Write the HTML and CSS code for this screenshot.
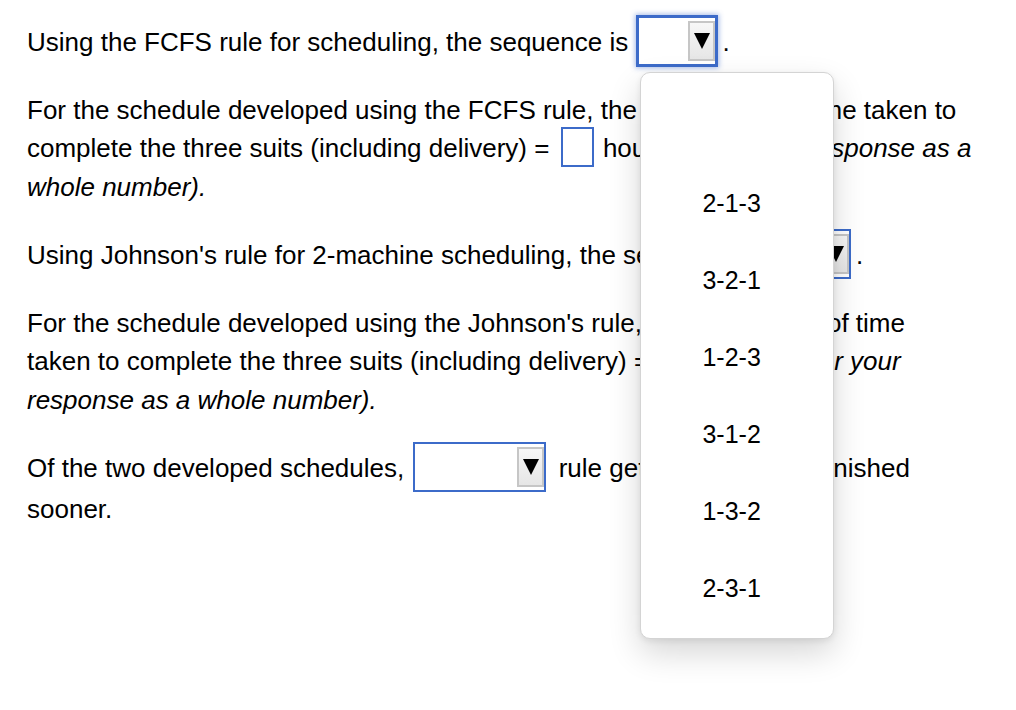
FILE: index.html
```html
<!DOCTYPE html>
<html lang="en">
<head>
  <meta charset="UTF-8" />
  <meta name="viewport" content="width=device-width, initial-scale=1.0"/>
  <title>Scheduling question</title>
  <link rel="stylesheet" href="styles.css">
</head>
<body>
  <div class="question">
    <div class="para">
      Using the FCFS rule for scheduling, the sequence is
      <span class="pick pick-open" style="width: 80px;">
        <span class="pick-btn"><span class="caret"></span></span>
        <ul class="pick-menu">
          <li>&nbsp;</li>
          <li>2-1-3</li>
          <li>3-2-1</li>
          <li>1-2-3</li>
          <li>3-1-2</li>
          <li>1-3-2</li>
          <li>2-3-1</li>
        </ul>
      </span>.
    </div>

    <div class="para">
      For the schedule developed using the FCFS rule, the total length of time taken to
      complete the three suits (including delivery) = <span class="blank"></span> hours
      <em>(enter your response as a whole number).</em>
    </div>

    <div class="para">
      Using Johnson's rule for 2-machine scheduling, the sequence is
      <span class="pick" style="width: 80px;">
        <span class="pick-btn"><span class="caret"></span></span>
      </span>.
    </div>

    <div class="para">
      For the schedule developed using the Johnson's rule, the total length of time
      taken to complete the three suits (including delivery) = <span class="blank"></span> hours
      <em>(enter your response as a whole number).</em>
    </div>

    <div class="para">
      Of the two developed schedules,
      <span class="pick pick-tall" style="width: 133px;">
        <span class="pick-btn"><span class="caret"></span></span>
      </span>
      rule gets all three jobs finished sooner.
    </div>
  </div>
</body>
</html>
```

FILE: styles.css
```css
* {
  box-sizing: border-box;
}

body {
  min-height: 100vh;
  margin: 0;
  padding: 23px 43px 0 27px;
  background: #fff;
  color: #000;
  font-family: 'Liberation Sans', Arial, sans-serif;
  font-size: 26px;
  line-height: 38px;
}

.para {
  margin: 0 0 30px;
}

.para em {
  font-style: italic;
}

/* dropdown answer */
.pick {
  position: relative;
  display: inline-flex;
  align-items: center;
  justify-content: flex-end;
  height: 50px;
  margin: -12.5px 5px -6px 2px;
  border: 2px solid #3c6bc9;
  background: #fff;
  vertical-align: middle;
}

/* this one pushes its line down a little */
.pick-tall {
  margin-top: -8.5px;
  margin-bottom: -2px;
}

.pick-open {
  box-shadow: 0 0 0 1px #3c6bc9, 0 0 5px 2px rgba(60, 107, 201, 0.45);
}

.pick-btn {
  display: flex;
  align-items: center;
  justify-content: center;
  width: 27px;
  height: 40px;
  border: 2px solid #c6c6c6;
  background: linear-gradient(#f7f7f7, #e6e6e6);
}

.caret {
  width: 0;
  height: 0;
  border-left: 8px solid transparent;
  border-right: 8px solid transparent;
  border-top: 16px solid #000;
}

.pick-menu {
  position: absolute;
  left: 1px;
  top: calc(100% + 8px);
  z-index: 10;
  width: 194px;
  margin: 0;
  padding: 15px 0 11px;
  list-style: none;
  background: #fff;
  border: 1px solid #d4d4d4;
  border-radius: 10px;
  box-shadow: 0 14px 32px rgba(0, 0, 0, 0.16), 0 2px 6px rgba(0, 0, 0, 0.08);
  font-size: 25px;
}

.pick-menu li {
  height: 77px;
  line-height: 77px;
  padding-left: 61px;
  white-space: nowrap;
}

/* numeric answer */
.blank {
  display: inline-block;
  width: 33px;
  height: 40px;
  margin: -5.5px 2px 1px 4px;
  border: 2px solid #3c6bc9;
  vertical-align: middle;
}
```
